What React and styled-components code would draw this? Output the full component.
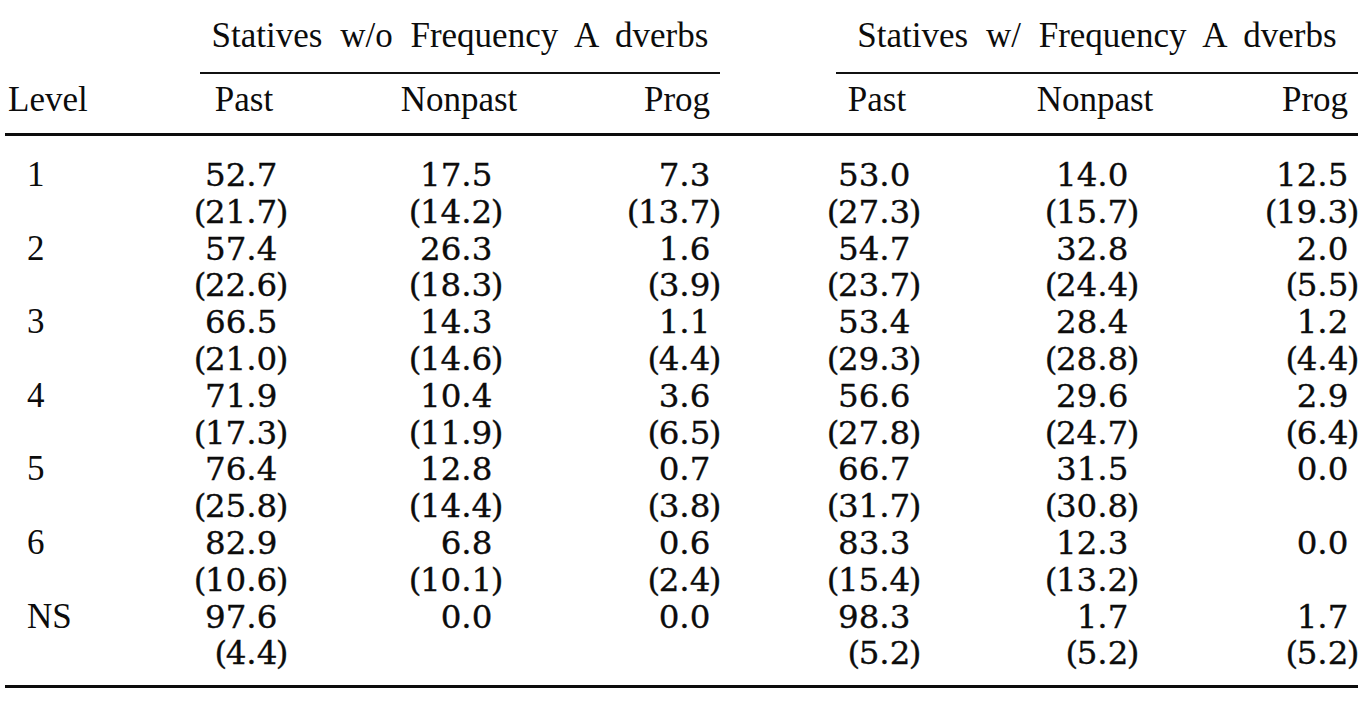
import React from "react";
import styled, { createGlobalStyle, css } from "styled-components";

const Global = createGlobalStyle`
  html, body { margin: 0; padding: 0; background: #fff; }
  body { width: 1366px; height: 706px; overflow: hidden; }
`;

const columns = css`
  display: grid;
  grid-template-columns: 195px 87px 215px 218px 200px 218px 220px;
`;

const Page = styled.div`
  padding-left: 5px;
  color: #0c0c0c;
`;

const Table = styled.div`
  width: 1353px;
  display: flex;
  flex-direction: column;
`;

const GroupRow = styled.div`
  ${columns}
`;

const GroupTitle = styled.div`
  grid-column: ${(p) => p.$span};
  margin-left: ${(p) => p.$offset || 0}px;
  padding: 16px 0 16px;
  border-bottom: 2px solid #111;
  font-family: "Liberation Serif", "Times New Roman", serif;
  font-size: 35px;
  line-height: 40px;
  word-spacing: 9px;
  text-align: center;
  white-space: nowrap;
`;

const HeadRow = styled.div`
  ${columns}
  border-bottom: 3px solid #0c0c0c;
  font-family: "Liberation Serif", "Times New Roman", serif;
  font-size: 35px;
  line-height: 40px;
`;

const LevelHead = styled.div`
  padding: 6px 0 13px 3px;
`;

const ColHead = styled.div`
  justify-self: end;
  width: 86px;
  padding: 6px 0 13px;
  display: flex;
  justify-content: center;
  white-space: nowrap;
`;

const Body = styled.div`
  ${columns}
  padding: 21px 0 13px;
  border-bottom: 3px solid #0c0c0c;
`;

const LevelCell = styled.div`
  padding-left: 22px;
  font-family: "Liberation Serif", "Times New Roman", serif;
  font-size: 35px;
  line-height: 36.8px;
`;

const NumCell = styled.div`
  display: flex;
  flex-direction: column;
  align-items: flex-end;
  font-family: "DejaVu Serif", "Liberation Serif", serif;
  font-size: 32.5px;
  line-height: 36.8px;
  white-space: nowrap;
  -webkit-text-stroke: 0.35px #0c0c0c;
`;

const Val = styled.div`
  padding-right: calc(0.39em - 3px);
`;

const Sd = styled.div`
  min-height: 36.8px;
`;

const Paren = styled.span`
  margin: 0 -1.5px;
`;

const groups = [
  { title: "Statives w/o Frequency A dverbs", span: "2 / 5", offset: 0 },
  { title: "Statives w/ Frequency A dverbs", span: "5 / 8", offset: 116 },
];

const heads = ["Past", "Nonpast", "Prog", "Past", "Nonpast", "Prog"];

const rows = [
  ["1", [["52.7", "21.7"], ["17.5", "14.2"], ["7.3", "13.7"], ["53.0", "27.3"], ["14.0", "15.7"], ["12.5", "19.3"]]],
  ["2", [["57.4", "22.6"], ["26.3", "18.3"], ["1.6", "3.9"], ["54.7", "23.7"], ["32.8", "24.4"], ["2.0", "5.5"]]],
  ["3", [["66.5", "21.0"], ["14.3", "14.6"], ["1.1", "4.4"], ["53.4", "29.3"], ["28.4", "28.8"], ["1.2", "4.4"]]],
  ["4", [["71.9", "17.3"], ["10.4", "11.9"], ["3.6", "6.5"], ["56.6", "27.8"], ["29.6", "24.7"], ["2.9", "6.4"]]],
  ["5", [["76.4", "25.8"], ["12.8", "14.4"], ["0.7", "3.8"], ["66.7", "31.7"], ["31.5", "30.8"], ["0.0", null]]],
  ["6", [["82.9", "10.6"], ["6.8", "10.1"], ["0.6", "2.4"], ["83.3", "15.4"], ["12.3", "13.2"], ["0.0", null]]],
  ["NS", [["97.6", "4.4"], ["0.0", null], ["0.0", null], ["98.3", "5.2"], ["1.7", "5.2"], ["1.7", "5.2"]]],
];

export default function App() {
  return (
    <Page>
      <Global />
      <Table>
        <GroupRow>
          {groups.map((g) => (
            <GroupTitle key={g.title} $span={g.span} $offset={g.offset}>
              {g.title}
            </GroupTitle>
          ))}
        </GroupRow>
        <HeadRow>
          <LevelHead>Level</LevelHead>
          {heads.map((h, i) => (
            <ColHead key={i}>{h}</ColHead>
          ))}
        </HeadRow>
        <Body>
          {rows.map(([level, cells]) => (
            <React.Fragment key={level}>
              <LevelCell>{level}</LevelCell>
              {cells.map(([v, sd], i) => (
                <NumCell key={i}>
                  <Val>{v}</Val>
                  <Sd>
                    {sd && (
                      <>
                        <Paren>(</Paren>
                        {sd}
                        <Paren>)</Paren>
                      </>
                    )}
                  </Sd>
                </NumCell>
              ))}
            </React.Fragment>
          ))}
        </Body>
      </Table>
    </Page>
  );
}
